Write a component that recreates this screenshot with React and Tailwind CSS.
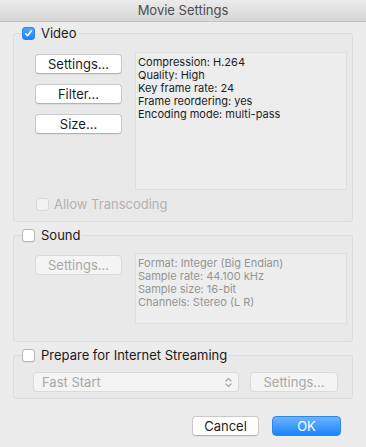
const videoInfo = [
  'Compression: H.264',
  'Quality: High',
  'Key frame rate: 24',
  'Frame reordering: yes',
  'Encoding mode: multi-pass',
];

const soundInfo = [
  'Format: Integer (Big Endian)',
  'Sample rate: 44.100 kHz',
  'Sample size: 16-bit',
  'Channels: Stereo (L R)',
];

function Check({ checked, disabled }) {
  if (checked) {
    return (
      <span className="w-[13px] h-[13px] rounded-[3px] bg-gradient-to-b from-[#4ea6fd] to-[#1a82fb] border border-[#2d86f0] flex items-center justify-center shrink-0">
        <svg width="9" height="9" viewBox="0 0 9 9" fill="none">
          <path d="M1.6 4.8 L3.6 6.8 L7.4 1.8" stroke="white" strokeWidth="1.6" strokeLinecap="round" strokeLinejoin="round" />
        </svg>
      </span>
    );
  }
  return (
    <span
      className={
        disabled
          ? 'w-[13px] h-[13px] rounded-[3px] bg-[#f2f2f2] border border-[#d8d8d8] shrink-0'
          : 'w-[13px] h-[13px] rounded-[3px] bg-white border border-[#b3b3b3] shadow-[0_1px_0_rgba(0,0,0,0.04)] shrink-0'
      }
    />
  );
}

function Button({ children, disabled, className = '' }) {
  const look = disabled
    ? 'bg-[#f4f4f4] border-[#dadada] text-[#a8a8a8]'
    : 'bg-white border-[#c9c9c9] border-b-[#b3b3b3] text-[#1c1c1c] shadow-[0_1px_0_rgba(0,0,0,0.04)]';
  return (
    <div className={`h-[20px] rounded-[4px] border flex items-center justify-center text-[13px] leading-none ${look} ${className}`}>
      {children}
    </div>
  );
}

function Legend({ checked, label }) {
  return (
    <legend className="h-[15px] flex items-center gap-[6px] pr-[2px]">
      <Check checked={checked} />
      <span className="text-[13px] leading-[15px] text-[#1a1a1a]">{label}</span>
    </legend>
  );
}

function InfoBox({ lines, muted, className = '' }) {
  return (
    <div className={`flex-1 border border-[#dfdfdf] bg-[#ededed] pl-[2px] pt-[3px] ${className}`}>
      {lines.map((l) => (
        <div key={l} className={`text-[11px] leading-[13px] ${muted ? 'text-[#959595]' : 'text-[#1c1c1c]'}`}>
          {l}
        </div>
      ))}
    </div>
  );
}

export default function App() {
  return (
    <div className="w-[366px] h-[447px] bg-[#ececec] flex flex-col font-[Inter,sans-serif] select-none overflow-hidden">
      {/* title bar */}
      <div className="h-[22px] shrink-0 border-b border-[#c2c2c2] bg-gradient-to-b from-[#ebebeb] to-[#d6d6d6] flex items-center justify-center text-[13px] text-[#4d4d4d]">
        Movie Settings
      </div>

      <div className="px-[13px] flex flex-col">
        {/* video */}
        <fieldset className="mt-[4px] border border-[#dcdcdc] bg-[#e9e9e9] rounded-[3px] pl-[8px] pr-[5px] pt-[11px] pb-[10px]">
          <Legend checked label="Video" />
          <div className="flex gap-[13px]">
            <div className="ml-[13px] mt-[2px] w-[87px] flex flex-col gap-[10px]">
              <Button>Settings...</Button>
              <Button>Filter...</Button>
              <Button>Size...</Button>
            </div>
            <InfoBox lines={videoInfo} className="h-[138px]" />
          </div>
          <div className="mt-[8px] ml-[14px] flex items-center gap-[5px]">
            <Check disabled />
            <span className="text-[13px] leading-[13px] text-[#b2b2b2]">Allow Transcoding</span>
          </div>
        </fieldset>

        {/* sound */}
        <fieldset className="mt-[6px] border border-[#dcdcdc] bg-[#e9e9e9] rounded-[3px] pl-[8px] pr-[5px] pt-[10px] pb-[17px]">
          <Legend label="Sound" />
          <div className="flex gap-[13px]">
            <div className="ml-[13px] mt-[2px] w-[87px]">
              <Button disabled>Settings...</Button>
            </div>
            <InfoBox lines={soundInfo} muted className="h-[71px]" />
          </div>
        </fieldset>

        {/* streaming */}
        <fieldset className="mt-[6px] border border-[#dcdcdc] bg-[#e9e9e9] rounded-[3px] pl-[8px] pr-[5px] pt-[9px] pb-[6px]">
          <Legend label="Prepare for Internet Streaming" />
          <div className="ml-[11px] flex gap-[11px]">
            <div className="w-[206px] h-[20px] rounded-[4px] border border-[#dadada] bg-[#f4f4f4] flex items-center justify-between pl-[8px] pr-[6px]">
              <span className="text-[13px] leading-none text-[#a8a8a8]">Fast Start</span>
              <svg width="7" height="11" viewBox="0 0 7 11" fill="none">
                <path d="M1 4 L3.5 1.5 L6 4" stroke="#a8a8a8" strokeWidth="1.2" strokeLinecap="round" strokeLinejoin="round" />
                <path d="M1 7 L3.5 9.5 L6 7" stroke="#a8a8a8" strokeWidth="1.2" strokeLinecap="round" strokeLinejoin="round" />
              </svg>
            </div>
            <Button disabled className="w-[88px]">Settings...</Button>
          </div>
        </fieldset>

        {/* footer */}
        <div className="mt-[17px] pr-[12px] flex justify-end gap-[13px]">
          <Button className="w-[67px]">Cancel</Button>
          <div className="w-[69px] h-[20px] rounded-[4px] border border-[#2f86f3] bg-gradient-to-b from-[#6ab3fb] to-[#1283fd] flex items-center justify-center text-[13px] leading-none text-white">
            OK
          </div>
        </div>
      </div>
    </div>
  );
}
